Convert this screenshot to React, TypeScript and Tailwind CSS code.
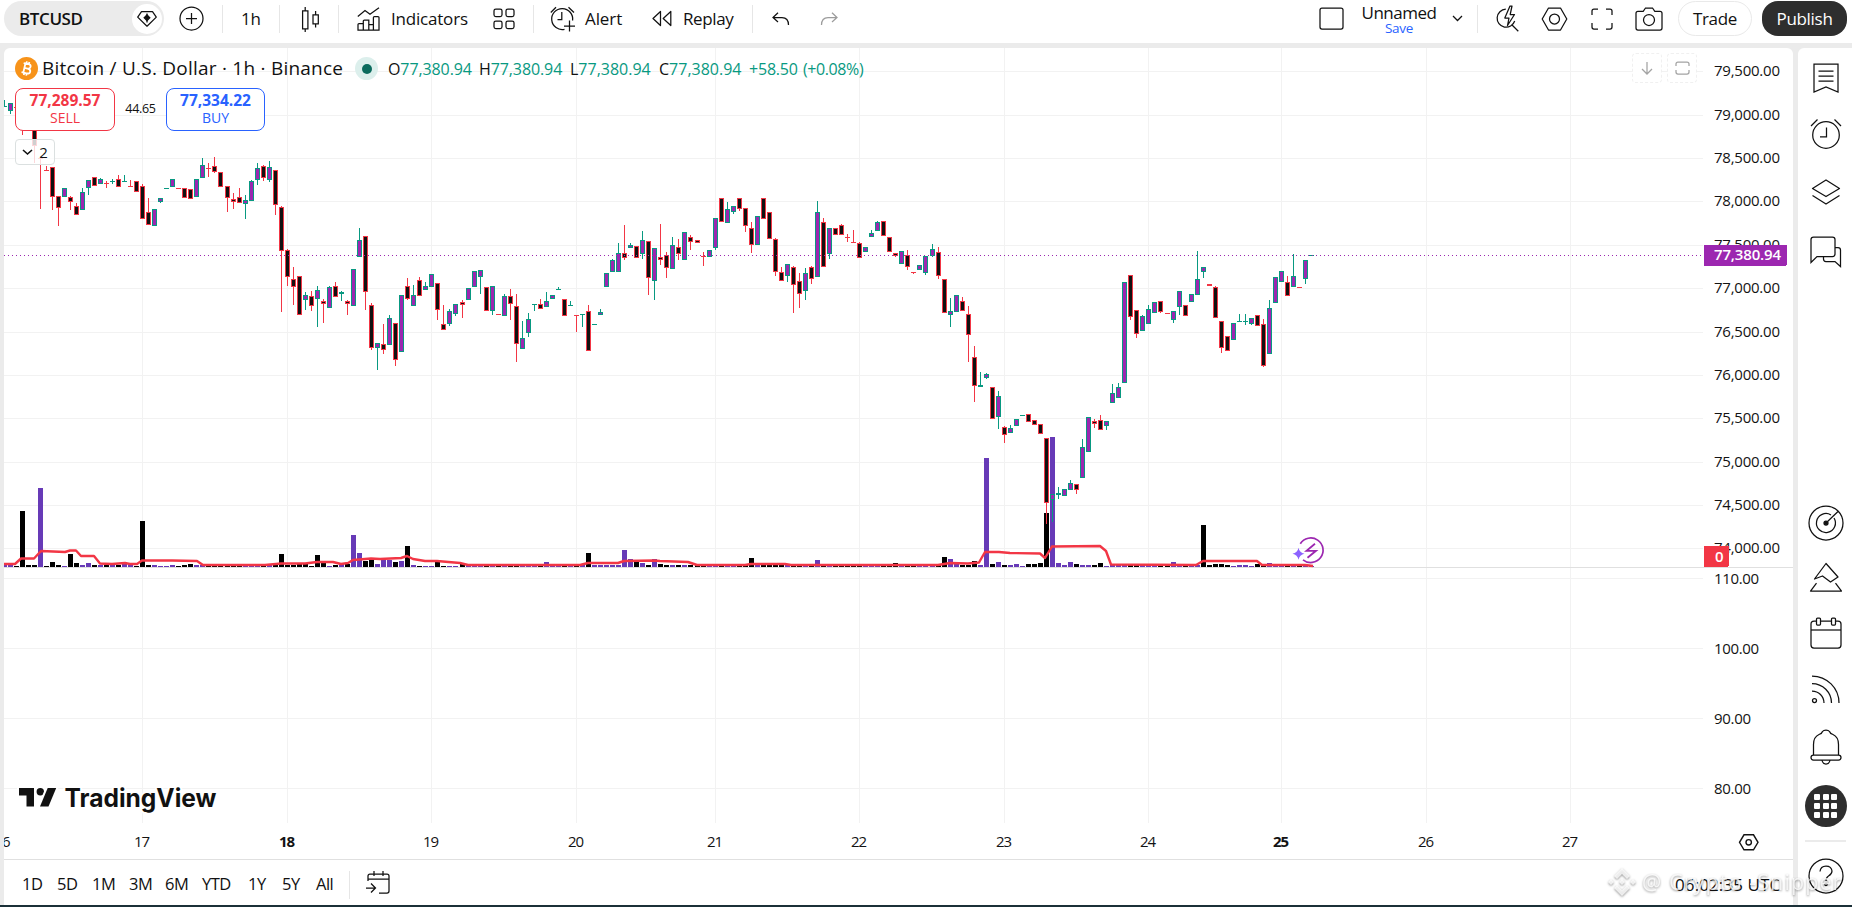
// EXTERNAL MODULES
import type { ReactNode } from "react";

// TYPES
// x, high, body top, body bottom, low, 1 = up / 0 = down
type Candle = [number, number, number, number, number, 0 | 1];

/******************************************************************************/

// DATA
const candles: Candle[] = [
  [4, 100, 106, 107, 107, 1], [10, 103, 103, 111, 114, 1], [16, 100, 107, 108, 112, 0],
  [22, 112, 115, 126, 135, 0], [28, 118, 120, 126, 129, 0], [34, 128, 129, 146, 163, 0],
  [40, 158, 158, 159, 209, 0], [46, 166, 170, 171, 171, 0], [52, 167, 167, 197, 210, 0],
  [58, 196, 196, 208, 226, 0], [64, 188, 188, 197, 197, 1], [70, 196, 197, 202, 210, 0],
  [76, 203, 206, 215, 215, 0], [82, 188, 192, 210, 210, 1], [88, 180, 180, 188, 195, 1],
  [94, 177, 177, 186, 186, 0], [100, 178, 179, 184, 184, 1], [106, 181, 183, 184, 188, 0],
  [112, 179, 181, 182, 184, 1], [118, 175, 179, 187, 187, 0], [124, 175, 181, 182, 182, 1],
  [130, 180, 186, 187, 187, 0], [136, 181, 181, 192, 192, 0], [142, 184, 186, 219, 219, 0],
  [148, 198, 212, 225, 225, 0], [154, 209, 209, 226, 226, 1], [160, 198, 198, 202, 203, 1],
  [166, 188, 188, 189, 189, 1], [172, 179, 179, 187, 187, 1], [178, 188, 188, 189, 189, 0],
  [184, 188, 188, 198, 198, 0], [190, 189, 189, 199, 199, 0], [196, 179, 179, 197, 197, 1],
  [202, 158, 165, 178, 178, 1], [208, 163, 168, 169, 177, 0], [214, 157, 166, 172, 173, 0],
  [220, 172, 172, 187, 187, 0], [227, 186, 186, 198, 212, 0], [233, 193, 199, 202, 209, 0],
  [239, 188, 197, 203, 203, 0], [245, 195, 200, 204, 219, 1], [251, 180, 181, 201, 201, 1],
  [257, 163, 168, 180, 185, 1], [263, 165, 166, 178, 181, 0], [269, 161, 167, 180, 182, 1],
  [275, 170, 170, 205, 215, 0], [281, 206, 207, 251, 312, 0], [287, 249, 250, 277, 286, 0],
  [293, 267, 279, 287, 305, 0], [299, 276, 276, 315, 315, 0], [305, 292, 295, 300, 310, 1],
  [311, 291, 296, 306, 311, 0], [317, 286, 290, 299, 327, 1], [323, 299, 301, 304, 323, 0],
  [329, 286, 287, 308, 308, 1], [335, 282, 286, 297, 297, 0], [341, 291, 292, 294, 301, 1],
  [347, 300, 301, 304, 315, 0], [353, 269, 269, 306, 306, 1], [359, 228, 240, 257, 257, 1],
  [365, 236, 236, 292, 310, 0], [371, 303, 305, 348, 350, 0], [377, 343, 343, 348, 370, 1],
  [383, 324, 344, 350, 354, 0], [389, 315, 318, 345, 345, 1], [395, 323, 323, 360, 366, 0],
  [401, 295, 295, 352, 352, 1], [407, 278, 286, 299, 300, 0], [413, 285, 295, 306, 306, 1],
  [419, 277, 280, 296, 296, 0], [425, 282, 286, 290, 290, 1], [431, 274, 274, 287, 287, 1],
  [437, 283, 283, 310, 320, 0], [443, 305, 324, 330, 330, 0], [449, 309, 311, 324, 326, 1],
  [455, 304, 304, 314, 316, 1], [462, 300, 302, 305, 318, 0], [468, 288, 288, 300, 300, 1],
  [474, 271, 271, 287, 287, 1], [480, 270, 270, 277, 294, 1], [486, 287, 287, 311, 311, 0],
  [492, 286, 286, 311, 315, 1], [498, 314, 314, 315, 315, 0], [504, 294, 296, 316, 316, 1],
  [510, 289, 296, 304, 320, 0], [516, 294, 306, 344, 362, 0], [522, 321, 338, 349, 349, 1],
  [528, 313, 319, 333, 337, 1], [534, 304, 304, 305, 311, 1], [540, 299, 304, 309, 309, 0],
  [546, 292, 301, 307, 307, 1], [552, 295, 295, 299, 299, 1], [558, 287, 289, 290, 290, 1],
  [564, 299, 299, 316, 316, 0], [570, 301, 305, 306, 306, 1], [576, 315, 315, 316, 332, 0],
  [582, 314, 314, 315, 327, 1], [588, 305, 311, 351, 351, 0], [594, 324, 324, 325, 325, 1],
  [600, 309, 312, 315, 315, 1], [606, 273, 273, 287, 287, 1], [612, 259, 260, 272, 272, 1],
  [618, 243, 253, 272, 272, 1], [624, 225, 253, 258, 260, 0], [630, 243, 245, 248, 248, 1],
  [636, 246, 246, 258, 258, 0], [642, 231, 240, 254, 259, 1], [648, 241, 241, 278, 295, 0],
  [654, 248, 248, 281, 300, 1], [660, 224, 257, 260, 265, 0], [666, 252, 255, 268, 278, 0],
  [672, 237, 245, 269, 269, 1], [678, 239, 247, 254, 260, 0], [684, 232, 232, 260, 260, 1],
  [690, 235, 237, 242, 250, 0], [697, 240, 240, 243, 243, 0], [703, 252, 256, 257, 266, 0],
  [709, 250, 250, 257, 257, 1], [715, 218, 218, 248, 250, 1], [721, 198, 198, 222, 222, 0],
  [727, 202, 209, 223, 223, 1], [733, 206, 206, 212, 214, 1], [739, 198, 198, 209, 211, 0],
  [745, 208, 208, 226, 232, 0], [751, 222, 228, 245, 253, 0], [757, 216, 216, 245, 245, 1],
  [763, 198, 198, 219, 219, 0], [769, 212, 212, 239, 239, 0], [775, 238, 239, 272, 276, 0],
  [781, 267, 272, 281, 281, 0], [787, 264, 264, 276, 282, 1], [793, 266, 267, 285, 313, 0],
  [799, 273, 281, 294, 308, 0], [805, 268, 273, 291, 300, 1], [811, 266, 267, 279, 284, 0],
  [817, 201, 212, 277, 277, 1], [823, 218, 222, 267, 267, 0], [829, 228, 228, 254, 259, 1],
  [835, 228, 228, 235, 235, 0], [841, 224, 225, 235, 235, 0], [847, 234, 237, 238, 242, 0],
  [853, 230, 242, 243, 243, 0], [859, 242, 243, 258, 258, 0], [865, 247, 247, 252, 252, 1],
  [871, 230, 233, 237, 237, 1], [877, 221, 222, 231, 231, 1], [883, 221, 221, 236, 236, 0],
  [889, 237, 237, 252, 252, 0], [895, 253, 253, 256, 257, 0], [901, 251, 251, 264, 264, 1],
  [907, 250, 255, 267, 270, 0], [913, 272, 272, 273, 274, 0], [919, 265, 265, 270, 270, 1],
  [925, 256, 256, 273, 275, 1], [932, 244, 249, 256, 257, 1], [938, 247, 252, 276, 279, 0],
  [944, 279, 279, 313, 313, 0], [950, 298, 311, 315, 327, 1], [956, 295, 295, 312, 312, 1],
  [962, 297, 301, 311, 311, 0], [968, 306, 314, 335, 362, 0], [974, 346, 357, 386, 402, 0],
  [980, 372, 385, 387, 387, 1], [986, 373, 374, 378, 379, 1], [992, 387, 387, 419, 419, 0],
  [998, 391, 396, 417, 429, 1], [1004, 426, 427, 435, 443, 0], [1010, 425, 428, 433, 433, 1],
  [1016, 419, 419, 426, 426, 1], [1022, 415, 415, 416, 416, 1], [1028, 414, 414, 422, 422, 0],
  [1034, 420, 420, 425, 425, 0], [1040, 424, 424, 434, 434, 0], [1046, 438, 438, 503, 524, 0],
  [1052, 494, 494, 500, 522, 1], [1058, 487, 493, 495, 499, 1], [1064, 489, 489, 496, 496, 1],
  [1070, 480, 483, 490, 490, 1], [1076, 484, 484, 490, 494, 0], [1082, 439, 447, 478, 478, 1],
  [1088, 417, 417, 452, 452, 1], [1094, 419, 421, 424, 428, 0], [1100, 415, 420, 430, 430, 0],
  [1106, 421, 421, 426, 430, 1], [1112, 384, 393, 403, 403, 1], [1118, 383, 387, 398, 398, 1],
  [1124, 282, 282, 383, 383, 1], [1130, 275, 275, 317, 320, 0], [1136, 310, 310, 334, 338, 0],
  [1142, 315, 316, 331, 331, 1], [1148, 305, 309, 324, 324, 1], [1154, 302, 302, 313, 313, 1],
  [1160, 301, 301, 312, 313, 0], [1167, 313, 313, 314, 314, 0], [1173, 311, 311, 320, 323, 1],
  [1179, 291, 291, 307, 315, 1], [1185, 305, 305, 316, 316, 0], [1191, 294, 294, 302, 302, 1],
  [1197, 251, 279, 295, 295, 1], [1203, 267, 267, 272, 278, 1], [1209, 284, 284, 286, 286, 0],
  [1215, 286, 287, 318, 318, 0], [1221, 321, 321, 348, 353, 0], [1227, 336, 336, 351, 351, 0],
  [1233, 323, 323, 340, 340, 1], [1239, 314, 321, 322, 322, 1], [1245, 314, 321, 322, 325, 1],
  [1251, 318, 318, 324, 325, 1], [1257, 315, 315, 326, 326, 0], [1263, 319, 324, 366, 367, 0],
  [1269, 300, 308, 354, 354, 1], [1275, 277, 277, 303, 303, 1], [1281, 271, 271, 282, 282, 1],
  [1287, 276, 282, 296, 296, 0], [1293, 254, 276, 287, 287, 1], [1299, 287, 287, 288, 288, 0],
  [1305, 260, 260, 279, 284, 1], [1311, 255, 255, 256, 256, 1],
];

// Volume bars that differ from the usual two pixel bar
const volumes: Record<number, number> = {
  16: 1, 22: 56, 40: 79, 46: 1, 52: 5, 64: 1, 70: 13, 76: 4, 88: 4, 124: 4, 136: 1,
  142: 46, 160: 1, 166: 1, 178: 1, 190: 3, 281: 13, 299: 3, 305: 4, 311: 1, 317: 12,
  323: 4, 329: 1, 341: 4, 347: 3, 353: 32, 359: 14, 365: 6, 371: 7, 377: 3, 383: 7,
  389: 7, 395: 5, 401: 6, 407: 21, 419: 1, 425: 1, 431: 1, 437: 5, 443: 1, 449: 1,
  455: 1, 462: 3, 510: 3, 546: 5, 588: 14, 624: 17, 630: 8, 636: 5, 642: 4, 654: 8,
  660: 3, 751: 9, 817: 7, 823: 3, 895: 4, 944: 10, 950: 8, 956: 4, 974: 6, 986: 109,
  992: 3, 998: 5, 1016: 3, 1022: 1, 1028: 3, 1034: 3, 1040: 4, 1046: 54, 1052: 130,
  1058: 4, 1070: 5, 1076: 3, 1100: 4, 1106: 1, 1173: 5, 1203: 42, 1215: 3, 1221: 3,
  1233: 1, 1251: 1, 1257: 3, 1269: 4, 1311: 1,
};

// Volume colour does not always follow the candle
const volumeUp: Record<number, boolean> = { 40: true, 305: false, 317: false, 64: true, 329: true, 130: true, 269: true, 383: true, 624: true, 1203: false };

const volumeAverage =
  "4,564 15,564 21,558.5 34,558.5 41,551 65,552 70,550.5 76,550.5 81,556 94,556 100,563.5 112,564 125,563 130,564 137,564 142,560.5 172,560.5 197,561 203,565 265,565 281,563.5 305,563.5 317,562 333,562 341,564 348,563 353,560 371,558.5 380,559 401,558 407,556 413,559 425,561 437,561 460,563 468,565 520,565 580,565 588,563 618,563 624,561 654,560.5 660,561 688,562 697,565 745,565 751,564 785,564 791,565 938,565 950,563 968,563.5 979,562.5 985,552 999,552 1010,553 1040,553.5 1045,558 1052,546.5 1100,546 1106,551 1111,564.5 1196,565 1203,561 1257,561 1262,565 1305,565 1313,566";

const priceLines: [number, string][] = [
  [71, "79,500.00"], [115, "79,000.00"], [158, "78,500.00"], [201, "78,000.00"],
  [245, "77,500.00"], [288, "77,000.00"], [332, "76,500.00"], [375, "76,000.00"],
  [418, "75,500.00"], [462, "75,000.00"], [505, "74,500.00"], [548, "74,000.00"],
];

const lowerLines: [number, string][] = [
  [578, "110.00"], [648, "100.00"], [718, "90.00"], [788, "80.00"],
];

const days: [number, string, boolean?][] = [
  [142, "17"], [287, "18", true], [431, "19"], [576, "20"], [715, "21"], [859, "22"],
  [1004, "23"], [1148, "24"], [1281, "25", true], [1426, "26"], [1570, "27"],
];

const ranges: [string, string][] = [
  ["1D", "w-[35px]"], ["5D", "w-[35px]"], ["1M", "w-[37px]"], ["3M", "w-[36px]"],
  ["6M", "w-[37px]"], ["YTD", "w-[46px]"], ["1Y", "w-[34px]"], ["5Y", "w-[34px]"], ["All", "w-[33px]"],
];

/******************************************************************************/

// ICON WRAPPER
type IconProps = { w: number; h: number; className?: string; children: ReactNode };

const Icon = ({ w, h, className = "", children }: IconProps) => (
  <svg
    width={w}
    height={h}
    viewBox={`0 0 ${w} ${h}`}
    fill="none"
    stroke="currentColor"
    strokeWidth="1.25"
    className={`shrink-0 ${className}`}
  >
    {children}
  </svg>
);

const Separator = ({ className = "" }: { className?: string }) => (
  <div className={`h-7 w-px shrink-0 bg-[#e6e6e6] ${className}`} />
);

const label = "shrink-0 whitespace-nowrap text-[17px] font-medium leading-none";

const Header = () => (
  <header className="flex h-[43px] shrink-0 bg-white">
    <div className="flex h-[37px] w-full items-center">
      <div className="ml-1 flex h-[35px] w-[160px] shrink-0 items-center justify-between rounded-full bg-[#ebebeb] pl-[15px] pr-[2px]">
        <span className="text-[17px] font-semibold leading-none tracking-[-0.4px]">BTCUSD</span>
        <span className="flex size-[30px] items-center justify-center rounded-full bg-white">
          <Icon w={20} h={16}>
            <path d="M4.5.7h11l3.8 5.4L10 15.2.7 6.1z" strokeLinejoin="round" />
            <path d="M10 2.5v9" />
            <path d="M7.2 6.8 10 4l2.8 2.8L10 9.6z" fill="currentColor" />
          </Icon>
        </span>
      </div>
      <Icon w={25} h={25} className="ml-[15px]">
        <circle cx="12.5" cy="12.5" r="11.5" />
        <path d="M12.5 7v11M7 12.5h11" />
      </Icon>
      <Separator className="ml-[18px]" />
      <span className={`${label} ml-[18px] w-5 tracking-[-0.3px]`}>1h</span>
      <Separator className="ml-[18px]" />
      <Icon w={19} h={26} className="ml-[21px]">
        <path d="M1.6 4.8h5.3v18H1.6zM4.2 1v4M4.2 23v3M12 8.8h5.3v9H12zM14.6 5v4M14.6 18v3.5" />
      </Icon>
      <Separator className="ml-[18px]" />
      <Icon w={23} h={24} className="ml-[18px]">
        <path d="M.8 9.5 8 3.5l5 3.8L22 .8M1 23v-5.5q0-1 1-1h4.3V23zM6.3 23V14q0-1 1-1h4.5v10M11.8 23v-5.5h4.6M16.4 23V10.500q0-1 1-1h3.600q1 0 1 1V23zM1 23h21" />
      </Icon>
      <span className={`${label} ml-[11px] w-[79px] tracking-[-0.2px]`}>Indicators</span>
      <Icon w={22} h={22} className="ml-[23px]">
        <rect x="1" y="1" width="8" height="7.500" rx="1.800" />
        <rect x="13" y="1" width="8" height="7.500" rx="1.800" />
        <rect x="1" y="13" width="8" height="7.500" rx="1.800" />
        <rect x="13" y="13" width="8" height="7.500" rx="1.800" />
      </Icon>
      <Separator className="ml-[18px]" />
      <Icon w={26} h={26} className="ml-4">
        <path d="M14.500 23.300A10.500 10.500 0 1 1 22.600 14.500M11.800 6v7.500H7.500M.8 6.500 6 1.200M18.500 1.200 24 6.500M19.500 14.500v11M14 20h11" />
      </Icon>
      <span className={`${label} ml-[9px] w-[40px] tracking-[-0.1px]`}>Alert</span>
      <Icon w={20} h={17} className="ml-[27px]">
        <path d="M8.500 1.500v14L1 8.500zM18.800 1.500v14L11.200 8.500z" strokeLinejoin="round" />
      </Icon>
      <span className={`${label} ml-[11px] w-[54px] tracking-[-0.400px]`}>Replay</span>
      <Separator className="ml-[15px]" />
      <Icon w={18} h={14} className="ml-[19px]">
        <path d="M6 .8 1 5.500l5 4.500M1 5.500h9q6.500 0 6.500 7.500" />
      </Icon>
      <Icon w={18} h={14} className="ml-[30px] text-[#9c9c9c]">
        <path d="M12 .8 17 5.500l-5 4.500M17 5.500H8Q1.500 5.500 1.500 13" />
      </Icon>

      <Icon w={25} h={23} className="ml-[481px]">
        <rect x="1" y="1" width="23" height="21" rx="2" />
      </Icon>
      <div className="ml-[17px] flex w-[76px] shrink-0 flex-col items-center pt-px">
        <span className="text-[17px] font-medium leading-[17px] tracking-[-0.5px]">Unnamed</span>
        <span className="text-[13.500px] leading-[14px] tracking-[-0.3px] text-[#2962ff]">Save</span>
      </div>
      <Icon w={11} h={7} className="ml-[15px]">
        <path d="m1 1 4.500 4.500L10 1" />
      </Icon>
      <Separator className="ml-[14px]" />
      <Icon w={24} h={28} className="ml-[18px]">
        <path d="M9.800 4.200A9 9 0 1 0 18.700 16M16.300 20.300l6 6M14 1 8.800 13h4.200l-1.500 7.500L18.500 9.500h-4.300L16 1z" strokeLinejoin="round" />
      </Icon>
      <Icon w={27} h={24} className="ml-[21px]">
        <path d="M7.500 1h12l6.300 11-6.300 11h-12L1.200 12z" strokeLinejoin="round" />
        <circle cx="13.500" cy="12" r="5" />
      </Icon>
      <Icon w={22} h={22} className="ml-[23px]">
        <path d="M1 7V3q0-2 2-2h4M15 1h4q2 0 2 2v4M21 15v4q0 2-2 2h-4M7 21H3q-2 0-2-2v-4" />
      </Icon>
      <Icon w={28} h={24} className="ml-[22px]">
        <path d="M3 4.300h5.200L10.500 1h7l2.300 3.300H25q2 0 2 2V21q0 2-2 2H3q-2 0-2-2V6.300q0-2 2-2z" />
        <circle cx="14" cy="13" r="5.500" />
      </Icon>
      <div className={`${label} ml-[15px] flex h-[35px] w-[74px] items-center justify-center rounded-[18px] border border-[#e9e9e9] tracking-[-0.3px]`}>
        Trade
      </div>
      <div className={`${label} ml-[10px] flex h-[35px] w-[85px] items-center justify-center rounded-[16px] bg-[#2e2e2e] tracking-[-0.3px] text-white`}>
        Publish
      </div>
    </div>
  </header>
);

/******************************************************************************/

const Chart = () => (
  <svg
    width="1789"
    height="811"
    viewBox="4 48 1789 811"
    className="block font-['Open_Sans',sans-serif] text-[15px]"
    shapeRendering="crispEdges"
  >
    {/* Grid */}
    <g fill="#f2f2f2">
      {[...priceLines, ...lowerLines].map(([y]) => (
        <rect key={y} x={4} y={y} width={1699} height={1} />
      ))}
      {days.map(([x]) => (
        <rect key={x} x={x} y={48} width={1} height={775} />
      ))}
    </g>
    <rect x={4} y={567} width={1789} height={1} fill="#e0e0e0" />

    {/* Volume */}
    {candles.map(([x, , , , , up]) => {
      const h = volumes[x] ?? 2;
      const isUp = volumeUp[x] ?? up === 1;
      return <rect key={x} x={x - 2} y={567 - h} width={5} height={h} fill={isUp ? "#673ab7" : "#000"} />;
    })}

    {/* Candles */}
    {candles.map(([x, high, top, bottom, low, up]) => (
      <g key={x} fill={up ? "#089981" : "#f23645"}>
        <rect x={x} y={high} width={1} height={low - high} />
        <rect x={x - 2} y={top} width={5} height={bottom - top} />
        {bottom - top > 2 && (
          <rect x={x - 1} y={top + 1} width={3} height={bottom - top - 2} fill={up ? "#9c27b0" : "#111"} />
        )}
      </g>
    ))}
    <polyline
      points={volumeAverage}
      fill="none"
      stroke="#f23645"
      strokeWidth="2.4"
      strokeLinejoin="round"
      shapeRendering="auto"
    />

    {/* Last price */}
    <path d="M4 255.500H1703" stroke="#9c27b0" strokeDasharray="1 3" />

    {/* Price scale */}
    <g fill="#131313">
      {priceLines.map(([y, text]) => (
        <text key={text} x={1714} y={y + 4.500} textLength={66}>{text}</text>
      ))}
      {lowerLines.map(([y, text]) => (
        <text key={text} x={1714} y={y + 5.500} textLength={text.length === 6 ? 45 : 37}>{text}</text>
      ))}
      <text x={2} y={847} textAnchor="middle">16</text>
      {days.map(([x, text, bold]) => (
        <text key={text} x={x} y={847} textAnchor="middle" textLength={16} fontWeight={bold ? 700 : 400}>
          {text}
        </text>
      ))}
    </g>
    <path d="M1704 245h81q2 0 2 2v17q0 2-2 2h-81z" fill="#9c27b0" />
    <text x={1714} y={260} textLength={67} fill="#fff" fontWeight={600}>77,380.94</text>
    <path d="M1704 546h23q2 0 2 2v17q0 2-2 2h-23z" fill="#f23645" />
    <text x={1715} y={562} fill="#fff" fontWeight={600}>0</text>

    {/* Events */}
    <g shapeRendering="auto" transform="translate(0 -0.7)">
      <path d="M1300.300 544.500A12.300 12.300 0 1 1 1303 560.500" fill="none" stroke="#9c27b0" strokeWidth="1.700" />
      <path d="M1315 544.500 1306.500 551.500H1316L1307.500 558.500" fill="none" stroke="#9c27b0" strokeWidth="1.800" />
      <path d="M1298.500 548.500q1 5 6 6-5 1-6 6-1-5-6-6 5-1 6-6z" fill="#8c62ff" />
    </g>

    {/* Scale settings */}
    <g fill="none" stroke="#131313" strokeWidth="1.400" shapeRendering="auto">
      <path d="M1744 834.800h9.500l4.500 7.500-4.500 7.500h-9.500l-4.500-7.500z" />
      <circle cx="1748.700" cy="842.300" r="2.700" />
    </g>

    {/* Logo */}
    <g fill="#111" stroke="#fff" strokeWidth="4" paintOrder="stroke" shapeRendering="auto">
      <path d="M19 788h15v18.500h-7.500V795.500H19z" />
      <circle cx="40.300" cy="791.700" r="3.700" />
      <path d="M47.700 788h8.500l-7.700 18.500H40z" />
      <text x={64.500} y={806.500} textLength={152} lengthAdjust="spacingAndGlyphs" className="font-['Inter',sans-serif] text-[25px] font-bold">
        TradingView
      </text>
    </g>
  </svg>
);

const Ohlc = ({ name, className }: { name: string; className: string }) => (
  <span className={`shrink-0 ${className}`}>
    {name}
    <span className="text-[#089981]">77,380.94</span>
  </span>
);

const Legend = () => (
  <div className="absolute left-[11px] top-[7px] flex flex-col text-[16px] leading-none">
    <div className="flex h-[27px] items-center whitespace-nowrap">
      <svg width="23" height="23" viewBox="0 0 23 23" className="shrink-0">
        <circle cx="11.500" cy="11.500" r="11.500" fill="#f7931a" />
        <g fill="none" stroke="#fff" strokeWidth="1.800" transform="rotate(13 11.500 11.500)">
          <path d="M7.500 6.800h5q2.600 0 2.600 2.200t-2.600 2.300H9.200M12.500 11.300q3.300 0 3.300 2.500t-3.300 2.400h-5M9.300 6.800v9.400M10.300 4.500v2.300M12.800 4.500v2.300M10.300 16.200v2.300M12.800 16.200v2.300" />
        </g>
      </svg>
      <span className="ml-[4px] w-[301px] shrink-0 text-[19px] tracking-[0.230px]">Bitcoin / U.S. Dollar · 1h · Binance</span>
      <span className="ml-[12px] flex size-[23px] shrink-0 items-center justify-center rounded-full bg-[#dcefec]">
        <span className="size-[10px] rounded-full bg-[#0b6b5d]" />
      </span>
      <Ohlc name="O" className="ml-[10px] w-[91px] tracking-[-0.100px]" />
      <Ohlc name="H" className="w-[91px] tracking-[-0.100px]" />
      <Ohlc name="L" className="w-[89px]" />
      <Ohlc name="C" className="w-[90px]" />
      <span className="w-[54px] text-[#089981] tracking-[-0.200px]">+58.50</span>
      <span className="text-[#089981] tracking-[-0.400px]">(+0.08%)</span>
    </div>
    <div className="mt-[6px] flex items-center">
      <div className="flex h-[43px] w-[100px] flex-col items-center justify-center gap-[3px] rounded-lg border border-[#f23645] bg-white text-[#f23645]">
        <span className="text-[15.500px] font-bold leading-[14px]">77,289.57</span>
        <span className="text-[14px] leading-[16px]">SELL</span>
      </div>
      <span className="w-[51px] text-center text-[12.500px] tracking-[-0.300px]">44.65</span>
      <div className="flex h-[43px] w-[99px] flex-col items-center justify-center gap-[3px] rounded-lg border border-[#2962ff] bg-white text-[#2962ff]">
        <span className="text-[15.500px] font-bold leading-[14px]">77,334.22</span>
        <span className="text-[14px] leading-[16px]">BUY</span>
      </div>
    </div>
    <div className="mt-2 flex h-[26px] w-10 items-center justify-center gap-[6px] rounded border border-[#dbe0e0] bg-white/80">
      <Icon w={11} h={7} className="[stroke-width:1.6]">
        <path d="m1 1 4.500 4L10 1" />
      </Icon>
      <span className="text-[15px]">2</span>
    </div>
  </div>
);

const PaneButtons = () => (
  <div className="absolute left-[1628px] top-[5px] flex gap-[5px] text-[#a3a3a3]">
    <div className="flex size-[30px] items-center justify-center rounded border border-dashed border-[#f0f0f0] bg-white">
      <Icon w={12} h={13}>
        <path d="M6 0v12M1 7l5 5 5-5" />
      </Icon>
    </div>
    <div className="flex size-[30px] items-center justify-center rounded border border-dashed border-[#f0f0f0] bg-white">
      <Icon w={15} h={14}>
        <path d="M1 5V3q0-2 2-2h9q2 0 2 2v2M14 9v2q0 2-2 2H3q-2 0-2-2V9" />
      </Icon>
    </div>
  </div>
);

const Footer = () => (
  <footer className="flex h-[46px] items-center border-t border-[#e0e0e0] bg-white pl-[18px] text-[16.500px] font-medium leading-none tracking-[-0.500px]">
    {ranges.map(([text, width]) => (
      <span key={text} className={`${width} shrink-0 whitespace-nowrap pt-[3px]`}>{text}</span>
    ))}
    <Separator className="mt-1" />
    <Icon w={25} h={25} className="ml-4">
      <path d="M2 11V6q0-2 2-2h17q2 0 2 2v15q0 2-2 2h-8M2 9h21M8 1v5M17 1v5M0 18h9M5 13.500l4.500 4.500L5 22.500" />
    </Icon>
    <span className="ml-auto mr-3 w-[106px] whitespace-nowrap pt-[3px] text-[17px] tracking-[0.100px]">06:02:35 UTC</span>
  </footer>
);

/******************************************************************************/

const Slot = ({ className, children }: { className: string; children: ReactNode }) => (
  <div className={`flex w-full shrink-0 items-center justify-center ${className}`}>{children}</div>
);

const Sidebar = () => (
  <aside className="mt-[5px] ml-[5px] flex w-[54px] shrink-0 flex-col items-center rounded-tl-md bg-white pt-[2px] pl-px">
    <Slot className="h-14">
      <Icon w={26} h={31}>
        <path d="M1 1h24v28l-12-5L1 29zM5.500 8h15M5.500 13h15M5.500 18h15" />
      </Icon>
    </Slot>
    <Slot className="h-14">
      <Icon w={32} h={32}>
        <circle cx="16" cy="17" r="13.300" />
        <path d="M16.500 9.500v9.300H10M1 8l6.500-6.500M24.500 1.500 31 8" />
      </Icon>
    </Slot>
    <Slot className="h-[60px]">
      <Icon w={30} h={26}>
        <path d="m15 1 13.500 8.500L15 17.500 1.500 9.500zM1.500 16.500 15 25l13.500-8.500" strokeLinejoin="round" />
      </Icon>
    </Slot>
    <Slot className="h-[60px]">
      <Icon w={32} h={32}>
        <path d="M3.500 1h19q2.500 0 2.500 2.500v14.500q0 2.500-2.500 2.500H7L1 26.500V3.500Q1 1 3.500 1z" />
        <path d="M25 11.500h3q2.500 0 2.500 2.500v16.500L25 25.500h-9q-2.500 0-2.500-2.500v-2.500" />
      </Icon>
    </Slot>
    <Slot className="mt-[213px] h-[55px]">
      <Icon w={36} h={36}>
        <circle cx="18" cy="18" r="17" />
        <path d="M26 13A9.500 9.500 0 1 1 23 10M18 18 30 6.500" />
        <circle cx="18" cy="18" r="2" fill="currentColor" />
      </Icon>
    </Slot>
    <Slot className="h-[55px]">
      <Icon w={34} h={31}>
        <path d="M17 1.500 5.500 17l8-3 8 6 7.500-5zM7.500 21 1.500 29h31l-6-8" strokeLinejoin="round" />
      </Icon>
    </Slot>
    <Slot className="h-14">
      <Icon w={32} h={32}>
        <rect x="1" y="4" width="30" height="27" rx="3" />
        <path d="M1 13h30" />
        <rect x="6.500" y="1" width="4" height="7" rx="1" fill="#fff" />
        <rect x="21.500" y="1" width="4" height="7" rx="1" fill="#fff" />
      </Icon>
    </Slot>
    <Slot className="h-14">
      <Icon w={29} h={29}>
        <circle cx="3.500" cy="25.500" r="2" />
        <path d="M1 1a27 27 0 0 1 27 27M1 8.500a19.500 19.500 0 0 1 19.500 19.500M1 16a12 12 0 0 1 12 12" />
      </Icon>
    </Slot>
    <Slot className="h-[60px]">
      <Icon w={32} h={36}>
        <path d="M3.500 26V15.500Q3.500 8 9 5.500 12 4.500 12.500 2.500q1-1.500 3.500-1.500t3.500 1.500Q20 4.500 23 5.500q5.500 2.500 5.500 10V26" />
        <rect x="1" y="26" width="30" height="5" rx="2.500" />
        <path d="M12 31q.5 4 4 4t4-4" />
      </Icon>
    </Slot>
    <Slot className="h-[57px]">
      <div className="grid size-[42px] grid-cols-3 place-content-center gap-[3px] rounded-full bg-[#2e2e2e] px-[9.500px]">
        {Array.from({ length: 9 }, (_, i) => (
          <span key={i} className="size-[6px] rounded-[1px] bg-white" />
        ))}
      </div>
    </Slot>
    <div className="mt-[6px] h-[2px] w-[41px] shrink-0 bg-[#ebebeb]" />
    <Slot className="mt-[6px] h-14">
      <Icon w={36} h={36}>
        <circle cx="18" cy="18" r="17" />
        <path d="M12 13.500Q12.500 8 18 8t6 5q0 3-3.500 5-2.500 1.500-2.500 5" />
        <circle cx="18" cy="26.500" r="1.200" />
      </Icon>
    </Slot>
  </aside>
);

const Watermark = () => (
  <div className="pointer-events-none absolute left-[1606px] top-[864px] flex items-center gap-1 whitespace-nowrap text-[21.500px] leading-[36px] text-white/80 [filter:drop-shadow(0_1px_1px_rgba(0,0,0,0.500))]">
    <svg width="32" height="32" viewBox="0 0 32 32" fill="currentColor">
      <path d="m16 2 8 8-3 3-5-5-5 5-3-3zM5 13l3 3-3 3-3-3zM27 13l3 3-3 3-3-3zM16 13l3 3-3 3-3-3zM8 22l3-3 5 5 5-5 3 3-8 8z" />
    </svg>
    <span className="w-[207px] tracking-[1.100px]">@ Crypto -Snipper</span>
  </div>
);

const App = () => (
  <div className="relative flex h-[907px] w-[1852px] flex-col overflow-hidden bg-[#ebebeb] font-['Open_Sans',sans-serif] text-[#111]">
    <Header />
    <div className="flex h-[862px] shrink-0">
      <main className="ml-1 mt-[5px] flex w-[1789px] shrink-0 flex-col overflow-hidden rounded-t-md bg-white">
        <div className="relative">
          <Chart />
          <Legend />
          <PaneButtons />
        </div>
        <Footer />
      </main>
      <Sidebar />
    </div>
    <div className="h-[2px] shrink-0 bg-[#1b3038]" />
    <Watermark />
  </div>
);

export default App;
